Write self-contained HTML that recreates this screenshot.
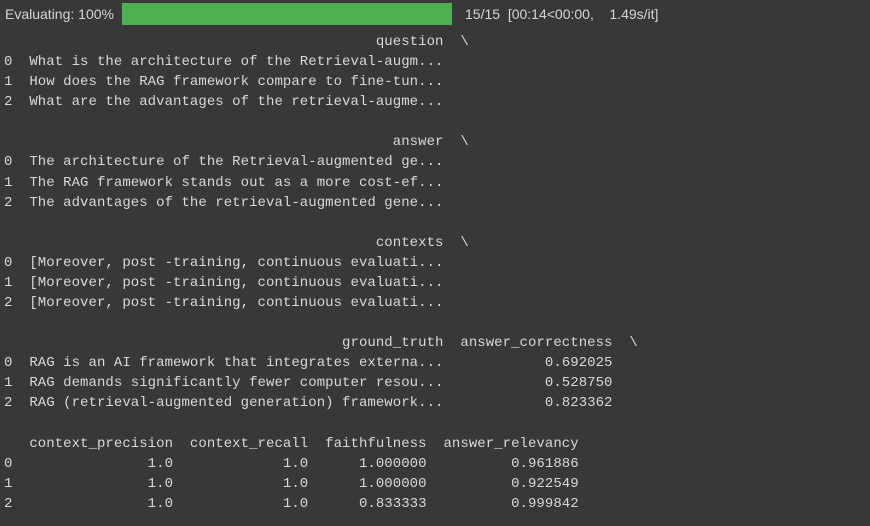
<!DOCTYPE html>
<html><head><style>
html,body{margin:0;padding:0;background:#383838;width:870px;height:526px;overflow:hidden}
.pb{position:absolute;left:5px;top:4px;font:14px "Liberation Sans",sans-serif;color:#d5d5d5;white-space:pre;line-height:20px}
.bar{position:absolute;left:122px;top:3px;width:330px;height:22px;background:#4caf50}
.st{position:absolute;left:465px;top:4px;font:14px "Liberation Sans",sans-serif;color:#d5d5d5;white-space:pre;line-height:20px}
pre{position:absolute;left:4px;top:32px;margin:0;font:14px/20.08px "Liberation Mono",monospace;letter-spacing:0.05px;color:#d8d8d8}
</style></head><body>
<div class="pb">Evaluating: 100%</div><div class="bar"></div>
<div class="st">15/15  [00:14&lt;00:00,    1.49s/it]</div>
<pre>                                            question  \
0  What is the architecture of the Retrieval-augm...
1  How does the RAG framework compare to fine-tun...
2  What are the advantages of the retrieval-augme...

                                              answer  \
0  The architecture of the Retrieval-augmented ge...
1  The RAG framework stands out as a more cost-ef...
2  The advantages of the retrieval-augmented gene...

                                            contexts  \
0  [Moreover, post -training, continuous evaluati...
1  [Moreover, post -training, continuous evaluati...
2  [Moreover, post -training, continuous evaluati...

                                        ground_truth  answer_correctness  \
0  RAG is an AI framework that integrates externa...            0.692025
1  RAG demands significantly fewer computer resou...            0.528750
2  RAG (retrieval-augmented generation) framework...            0.823362

   context_precision  context_recall  faithfulness  answer_relevancy
0                1.0             1.0      1.000000          0.961886
1                1.0             1.0      1.000000          0.922549
2                1.0             1.0      0.833333          0.999842</pre>
</body></html>
